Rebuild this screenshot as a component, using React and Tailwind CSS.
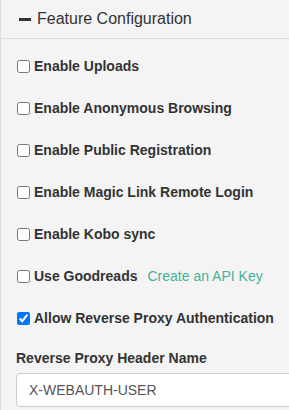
import { useState } from "react";

const FEATURES = [
  { id: "uploads", label: "Enable Uploads", checked: false },
  { id: "anonymous", label: "Enable Anonymous Browsing", checked: false },
  { id: "registration", label: "Enable Public Registration", checked: false },
  { id: "remote_login", label: "Enable Magic Link Remote Login", checked: false },
  { id: "kobo", label: "Enable Kobo sync", checked: false },
  { id: "goodreads", label: "Use Goodreads", checked: false, link: "Create an API Key" },
  { id: "reverse_proxy", label: "Allow Reverse Proxy Authentication", checked: true },
];

export default function App() {
  const [values, setValues] = useState(
    Object.fromEntries(FEATURES.map((f) => [f.id, f.checked]))
  );
  const [header, setHeader] = useState("X-WEBAUTH-USER");

  return (
    <div
      className="min-h-[410px] w-[289px] overflow-hidden border-l border-[#dddddd] bg-[#f4f4f4] text-[#333333]"
      style={{ fontFamily: '"Liberation Sans", Arial, sans-serif' }}
    >
      <div className="flex h-[39px] items-center border-b border-[#dddddd] pl-[18px]">
        <span className="mr-[6px] inline-block h-[3px] w-[12px] bg-[#333333]" />
        <span className="text-[16px] leading-[20px]">Feature Configuration</span>
      </div>

      <div className="pl-[15px] pt-[6px]">
        {FEATURES.map((f) => (
          <div key={f.id} className="flex h-[42px] items-center">
            <label className="flex items-center text-[14px] font-bold leading-[20px]">
              <input
                type="checkbox"
                checked={values[f.id]}
                onChange={(e) => setValues({ ...values, [f.id]: e.target.checked })}
                className="m-0 ml-[1px] mr-[4px] h-[13px] w-[13px]"
              />
              {f.label}
            </label>
            {f.link && (
              <a href="#" className="ml-[10px] text-[14px] leading-[20px] text-[#45b29d]">
                {f.link}
              </a>
            )}
          </div>
        ))}

        <label className="mt-[9px] block text-[14px] font-bold leading-[20px]">
          Reverse Proxy Header Name
        </label>
        <input
          type="text"
          value={header}
          onChange={(e) => setHeader(e.target.value)}
          className="mt-[5px] h-[34px] w-[300px] rounded-[4px] border border-[#cccccc] bg-white px-[12px] text-[14px] text-[#555555] outline-none"
        />
      </div>
    </div>
  );
}
